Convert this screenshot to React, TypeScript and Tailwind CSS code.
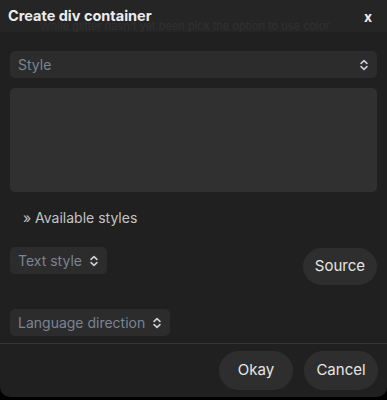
import React from 'react';

const UpDown: React.FC<{ className?: string }> = ({ className }) => (
  <svg viewBox="0 0 12 14" className={className} fill="none" stroke="currentColor" strokeWidth="2" strokeLinecap="round" strokeLinejoin="round">
    <path d="M2.5 5 6 1.8 9.5 5" />
    <path d="M2.5 9 6 12.2 9.5 9" />
  </svg>
);

const SelectPill: React.FC<{ label: string; full?: boolean }> = ({ label, full }) => (
  <div
    className={`flex items-center h-[27px] rounded-[5px] bg-[#2c2c2c] px-2 text-[14px] text-[#7a8495] ${
      full ? 'w-full justify-between' : 'gap-[7px]'
    }`}
  >
    <span>{label}</span>
    <UpDown className="w-[10px] h-[12px] text-[#c9cdd4]" />
  </div>
);

export default function App() {
  return (
    <div className="w-[387px] h-[400px] bg-black" style={{ fontFamily: 'Inter, "Noto Sans", sans-serif' }}>
      <div className="flex flex-col h-[397px] rounded-b-[10px] bg-[#202020] overflow-hidden">
        {/* Header */}
        <div className="relative flex items-center justify-between h-[32px] bg-[#252525] pl-2 pr-[15px]">
          <span className="absolute left-[40px] top-[21px] text-[11px] leading-[11px] text-white/[0.05] whitespace-nowrap">
            While glitter hasn't yet been pick the option to use color
          </span>
          <h1 className="relative text-[14.5px] font-bold text-[#ececec]">Create div container</h1>
          <span className="relative text-[14px] font-bold text-[#ececec]">x</span>
        </div>

        {/* Body */}
        <div className="flex flex-col px-[10px] pt-[19px]">
          <SelectPill label="Style" full />
          <div className="mt-[10px] h-[104px] rounded-[5px] bg-[#303030]" />
          <div className="mt-[15px] pl-[13px] text-[14px] text-[#c4c4c4]">» Available styles</div>
          <div className="mt-[19px] flex items-start justify-between">
            <SelectPill label="Text style" />
            <button className="mt-[1px] h-[37px] px-[12px] rounded-full bg-[#2e2e2e] text-[15px] text-[#e6e6e6]">
              Source
            </button>
          </div>
          <div className="mt-[24px] flex">
            <SelectPill label="Language direction" />
          </div>
        </div>

        {/* Footer */}
        <div className="mt-[7px] border-t border-[#363636] flex justify-end gap-[11px] pt-[7px] pr-[9px]">
          <button className="h-[39px] w-[74px] rounded-full bg-[#2e2e2e] text-[15px] text-[#e6e6e6]">Okay</button>
          <button className="h-[39px] w-[74px] rounded-full bg-[#2e2e2e] text-[15px] text-[#e6e6e6]">Cancel</button>
        </div>
      </div>
    </div>
  );
}
